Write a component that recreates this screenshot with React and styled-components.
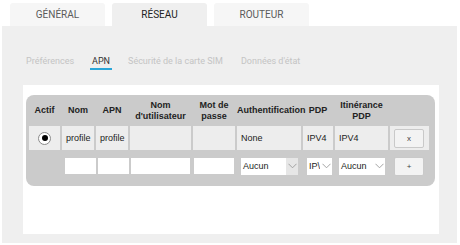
import React, { useState } from 'react';
import styled, { createGlobalStyle } from 'styled-components';

const GlobalStyle = createGlobalStyle`
  html, body {
    margin: 0;
    padding: 0;
    background: #fff;
  }
`;

const tabs = ['GÉNÉRAL', 'RÉSEAU', 'ROUTEUR'];
const subTabs = ['Préférences', 'APN', 'Sécurité de la carte SIM', "Données d'état"];
const colWidths = [31, 32, 32, 61, 42, 64, 30, 53, 39];

const ChevronDown = () => (
  <svg width="9" height="6" viewBox="0 0 9 6" fill="none">
    <path d="M0.5 0.8 L4.5 4.8 L8.5 0.8" stroke="#9a9a9a" strokeWidth="0.9" />
  </svg>
);

const App = () => {
  const [active, setActive] = useState(1);
  const [sub, setSub] = useState(1);

  return (
    <Page>
      <GlobalStyle />
      <TabBar>
        {tabs.map((t, i) => (
          <Tab key={t} $active={i === active} onClick={() => setActive(i)}>
            {t}
          </Tab>
        ))}
      </TabBar>
      <Panel>
        <SubTabBar>
          {subTabs.map((t, i) => (
            <SubTab key={t} $active={i === sub} onClick={() => setSub(i)}>
              {t}
            </SubTab>
          ))}
        </SubTabBar>
        <Card>
          <TableWrap>
            <Table>
              <colgroup>
                {colWidths.map((w, i) => (
                  <col key={i} style={{ width: w }} />
                ))}
              </colgroup>
              <thead>
                <tr>
                  <Th>Actif</Th>
                  <Th>Nom</Th>
                  <Th>APN</Th>
                  <Th>Nom<br />d'utilisateur</Th>
                  <Th>Mot de<br />passe</Th>
                  <Th>Authentification</Th>
                  <Th>PDP</Th>
                  <Th>Itinérance<br />PDP</Th>
                  <Th />
                </tr>
              </thead>
              <tbody>
                <DataRow>
                  <Td $center>
                    <Radio />
                  </Td>
                  <Td>profile</Td>
                  <Td>profile</Td>
                  <Td />
                  <Td />
                  <Td>None</Td>
                  <Td>IPV4</Td>
                  <Td>IPV4</Td>
                  <Td $center>
                    <SmallButton>x</SmallButton>
                  </Td>
                </DataRow>
                <InputRow>
                  <td />
                  <td><TextInput $w={31} $ml={3} /></td>
                  <td><TextInput $w={31} $ml={2} /></td>
                  <td><TextInput $w={59} $ml={1} /></td>
                  <td><TextInput $w={40} $ml={1} /></td>
                  <td>
                    <Select $w={57} $ml={4}>
                      <SelectText>Aucun</SelectText>
                      <Arrow $shaded><ChevronDown /></Arrow>
                    </Select>
                  </td>
                  <td>
                    <Select $w={25} $ml={4}>
                      <SelectText>IP\</SelectText>
                      <Arrow><ChevronDown /></Arrow>
                    </Select>
                  </td>
                  <td>
                    <Select $w={46} $ml={4}>
                      <SelectText>Aucun</SelectText>
                      <Arrow><ChevronDown /></Arrow>
                    </Select>
                  </td>
                  <td>
                    <SmallButton>+</SmallButton>
                  </td>
                </InputRow>
              </tbody>
            </Table>
          </TableWrap>
        </Card>
      </Panel>
    </Page>
  );
};

export default App;

// Styled Components
const Page = styled.div`
  width: 460px;
  height: 245px;
  padding: 3px 3px 0 2px;
  box-sizing: border-box;
`;

const TabBar = styled.div`
  display: flex;
  gap: 7px;
  padding-left: 8px;
`;

const Tab = styled.div`
  width: 95px;
  height: 23px;
  display: flex;
  align-items: center;
  justify-content: center;
  border-radius: 3px 3px 0 0;
  background: ${(p) => (p.$active ? '#efefef' : '#f6f6f6')};
  color: ${(p) => (p.$active ? '#222' : '#5a5a5a')};
  font-family: Roboto, 'Liberation Sans', sans-serif;
  font-size: 10px;
  cursor: pointer;
`;

const Panel = styled.div`
  width: 455px;
  height: 217px;
  background: #efefef;
  padding: 29px 0 0 0;
  box-sizing: border-box;
`;

const SubTabBar = styled.div`
  display: flex;
  gap: 18px;
  padding-left: 24px;
  height: 30px;
`;

const SubTab = styled.div`
  height: 13px;
  padding: 0 2px;
  margin: 0 -2px;
  font-family: Roboto, 'Liberation Sans', sans-serif;
  font-size: 9px;
  line-height: 13px;
  color: ${(p) => (p.$active ? '#333' : '#c4c4c4')};
  border-bottom: 2px solid ${(p) => (p.$active ? '#2aa6d8' : 'transparent')};
  cursor: pointer;
`;

const Card = styled.div`
  margin-left: 21px;
  width: 416px;
  height: 149px;
  background: #fff;
  padding: 10px 0 0 3px;
  box-sizing: border-box;
`;

const TableWrap = styled.div`
  width: 409px;
  height: 91px;
  background: #cbcbcb;
  border-radius: 8px;
  padding: 0 0 0 1px;
  box-sizing: border-box;
`;

const Table = styled.table`
  border-collapse: separate;
  border-spacing: 2px;
  table-layout: fixed;
  width: 404px;
  font-family: 'Liberation Sans', Arial, sans-serif;
  font-size: 9px;
  color: #222;
`;

const Th = styled.th`
  height: 27px;
  padding: 0;
  font-weight: bold;
  text-align: center;
  vertical-align: middle;
  line-height: 11px;
  white-space: nowrap;
`;

const DataRow = styled.tr`
  height: 24px;
`;

const Td = styled.td`
  background: #ededed;
  padding: 0 0 0 4px;
  text-align: ${(p) => (p.$center ? 'center' : 'left')};
  vertical-align: middle;
  ${(p) => p.$center && 'padding: 0;'}
`;

const InputRow = styled.tr`
  height: 28px;

  td {
    padding: 0;
    vertical-align: middle;
  }
`;

const Radio = styled.span`
  display: inline-block;
  width: 11px;
  height: 11px;
  border-radius: 50%;
  border: 1px solid #8a8a8a;
  background: #fff;
  position: relative;
  vertical-align: middle;

  &::after {
    content: '';
    position: absolute;
    left: 2.5px;
    top: 2.5px;
    width: 6px;
    height: 6px;
    border-radius: 50%;
    background: #000;
  }
`;

const SmallButton = styled.button`
  display: block;
  width: 30px;
  height: 19px;
  margin-left: 4px;
  padding: 0;
  border: 1px solid #c9c9c9;
  border-radius: 2px;
  background: #f3f3f3;
  font-family: 'Liberation Sans', Arial, sans-serif;
  font-size: 8px;
  color: #444;
  cursor: pointer;
`;

const TextInput = styled.input`
  display: block;
  width: ${(p) => p.$w}px;
  height: 16px;
  margin-left: ${(p) => p.$ml}px;
  padding: 0;
  border: none;
  background: #fff;
  box-sizing: border-box;
`;

const Select = styled.div`
  display: flex;
  align-items: center;
  width: ${(p) => p.$w}px;
  height: 17px;
  margin-left: ${(p) => p.$ml}px;
  background: #fff;
  overflow: hidden;
`;

const SelectText = styled.span`
  flex: 1;
  padding-left: 2px;
  font-size: 9px;
  color: #222;
  white-space: nowrap;
  overflow: hidden;
`;

const Arrow = styled.span`
  display: flex;
  align-items: center;
  justify-content: center;
  width: 12px;
  height: 100%;
  background: ${(p) => (p.$shaded ? '#e6e6e6' : 'transparent')};
`;
